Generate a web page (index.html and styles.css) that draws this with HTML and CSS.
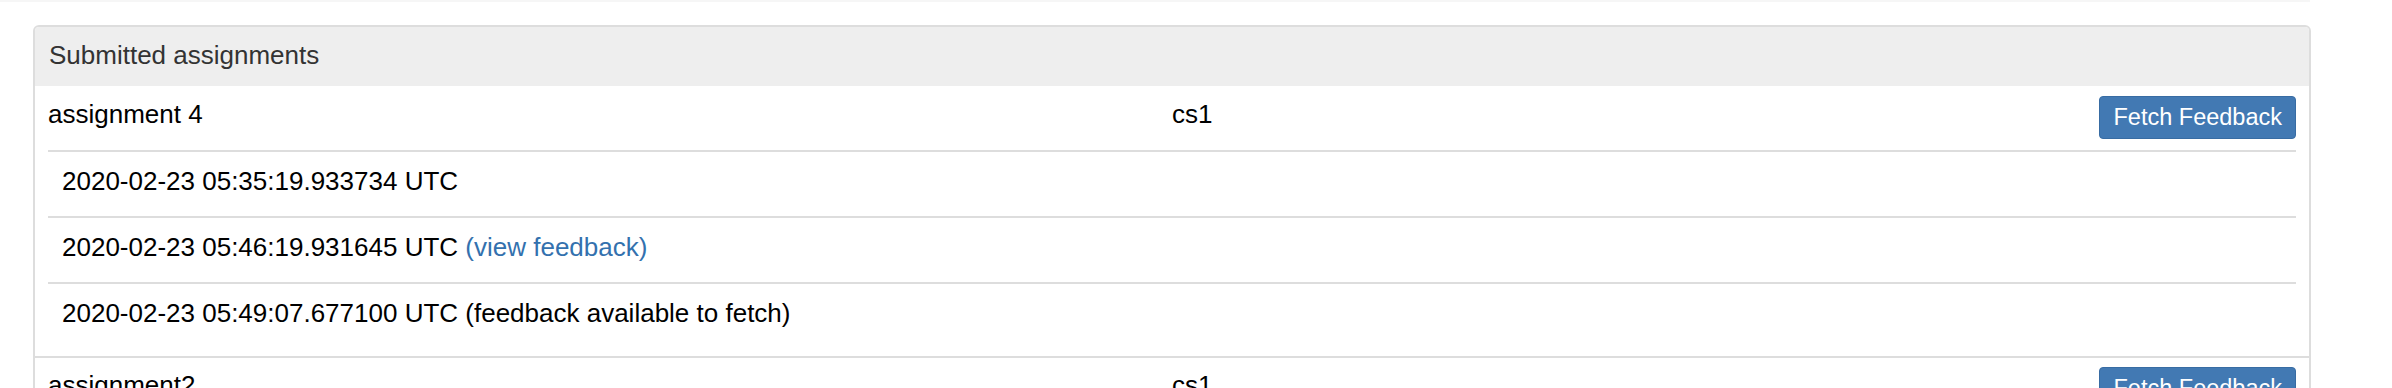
FILE: index.html
```html
<!DOCTYPE html>
<html>
<head>
<meta charset="utf-8">
<link rel="stylesheet" href="styles.css">
</head>
<body>
<div class="top-strip"></div>
<div class="panel">
  <div class="panel-heading">Submitted assignments</div>
  <div class="entry">
    <div class="entry-head">
      <div class="name">assignment 4</div>
      <div class="right">
        <span class="course">cs1</span>
        <button class="btn">Fetch Feedback</button>
      </div>
    </div>
    <ul class="subs">
      <li>2020-02-23 05:35:19.933734 UTC</li>
      <li>2020-02-23 05:46:19.931645 UTC <a href="#">(view feedback)</a></li>
      <li>2020-02-23 05:49:07.677100 UTC (feedback available to fetch)</li>
    </ul>
  </div>
  <div class="entry">
    <div class="entry-head">
      <div class="name">assignment2</div>
      <div class="right">
        <span class="course">cs1</span>
        <button class="btn">Fetch Feedback</button>
      </div>
    </div>
  </div>
</div>
</body>
</html>
```

FILE: styles.css
```css
html, body {
  margin: 0;
  padding: 0;
  background: #ffffff;
}

body {
  font-family: "Liberation Sans", Helvetica, Arial, sans-serif;
  font-size: 26px;
  line-height: 30px;
  color: #000;
}

.top-strip {
  width: 2310px;
  height: 2px;
  background: #f6f6f6;
}

.panel {
  margin: 23px 0 0 33px;
  width: 2274px;
  border: 2px solid #dddddd;
  border-radius: 6px;
  overflow: hidden;
}

.panel-heading {
  background: #eeeeee;
  color: #333333;
  padding: 13px 14px 16px 14px;
}

.entry {
  padding: 10px 13px 0 13px;
}

.entry + .entry {
  border-top: 2px solid #dddddd;
  padding-top: 9px;
}

.entry-head {
  display: grid;
  grid-template-columns: 1fr 1fr;
  align-items: start;
  margin-bottom: 11px;
}

.name {
  padding-top: 3px;
}

.right {
  display: flex;
  justify-content: space-between;
  align-items: flex-start;
}

.course {
  padding-top: 3px;
}

.btn {
  font-family: "Liberation Sans", Helvetica, Arial, sans-serif;
  font-size: 23.5px;
  line-height: 27px;
  color: #ffffff;
  background: #4279b3;
  border: 1px solid #386ca3;
  border-radius: 4px;
  padding: 7px 13px;
  margin: 0;
  cursor: pointer;
}

.subs {
  list-style: none;
  margin: 0 0 8px 0;
  padding: 0;
}

.subs li {
  border-top: 2px solid #dddddd;
  padding: 14px 14px 20px 14px;
}

.subs a {
  color: #3371ae;
  text-decoration: none;
}
```
